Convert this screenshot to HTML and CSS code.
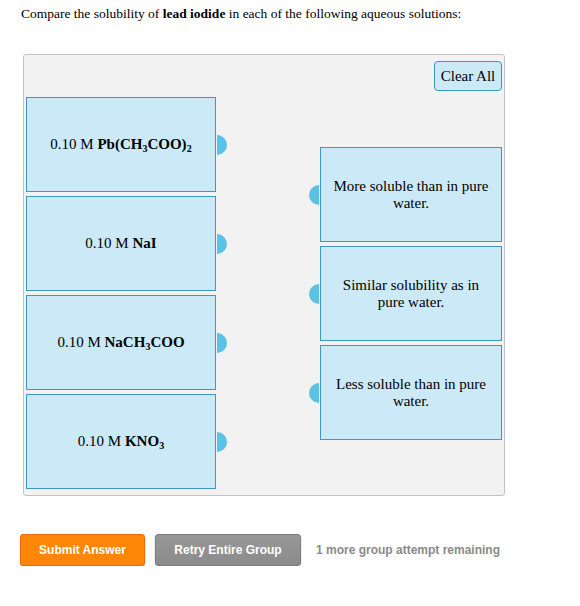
FILE: index.html
```html
<!DOCTYPE html>
<html>
<head>
<meta charset="utf-8">
<link rel="stylesheet" href="styles.css">
</head>
<body>
<div class="page">
  <p class="prompt">Compare the solubility of <b>lead iodide</b> in each of the following aqueous solutions:</p>
  <div class="board">
    <div class="board-head">
      <button class="clear">Clear All</button>
    </div>
    <div class="columns">
      <div class="col col-left">
        <div class="card src"><span>0.10 M <b>Pb(CH<sub>3</sub>COO)<sub>2</sub></b></span><i class="tab tab-right"></i></div>
        <div class="card src"><span>0.10 M <b>NaI</b></span><i class="tab tab-right"></i></div>
        <div class="card src"><span>0.10 M <b>NaCH<sub>3</sub>COO</b></span><i class="tab tab-right"></i></div>
        <div class="card src"><span>0.10 M <b>KNO<sub>3</sub></b></span><i class="tab tab-right"></i></div>
      </div>
      <div class="col col-right">
        <div class="card dst"><span>More soluble than in pure water.</span><i class="tab tab-left"></i></div>
        <div class="card dst"><span>Similar solubility as in pure water.</span><i class="tab tab-left"></i></div>
        <div class="card dst"><span>Less soluble than in pure water.</span><i class="tab tab-left"></i></div>
      </div>
    </div>
  </div>
  <div class="actions">
    <button class="btn btn-submit">Submit Answer</button>
    <button class="btn btn-retry">Retry Entire Group</button>
    <span class="remaining">1 more group attempt remaining</span>
  </div>
</div>
</body>
</html>
```
FILE: styles.css
```css
html, body {
  margin: 0;
  padding: 0;
  background: #ffffff;
}
.page {
  padding: 6px 0 0 21px;
  font-family: "Liberation Serif", "Times New Roman", serif;
  color: #000;
}
.prompt {
  margin: 0;
  font-size: 13.5px;
  line-height: 16px;
}
.board {
  box-sizing: border-box;
  margin: 32px 0 0 2px;
  width: 482px;
  border: 1px solid #b9c6d0;
  border-radius: 3px;
  background: #f2f2f2;
  padding: 6px 2px 6px 2px;
}
.board-head {
  display: flex;
  justify-content: flex-end;
}
.clear {
  font-family: "Liberation Serif", "Times New Roman", serif;
  font-size: 15px;
  color: #000;
  height: 30px;
  width: 68px;
  padding: 0;
  background: #cce9f7;
  border: 1px solid #3e97c2;
  border-radius: 4px;
}
.columns {
  display: flex;
  justify-content: space-between;
  margin-top: 6px;
}
.col {
  display: flex;
  flex-direction: column;
  gap: 4px;
}
.col-right {
  margin-top: 50px;
}
.card {
  position: relative;
  box-sizing: border-box;
  height: 95px;
  display: flex;
  align-items: center;
  justify-content: center;
  text-align: center;
  background: #cce9f7;
  border: 1px solid #3e97c2;
  font-size: 15px;
  line-height: 17px;
}
.src {
  width: 190px;
}
.dst {
  width: 182px;
  padding: 0 10px;
}
sub {
  font-size: 10px;
  line-height: 0;
  vertical-align: -3px;
}
.tab {
  position: absolute;
  top: 50%;
  width: 10px;
  height: 20px;
  margin-top: -10px;
  background: #5bc1e5;
}
.tab-right {
  left: 100%;
  margin-left: 2px;
  border-radius: 0 10px 10px 0;
}
.tab-left {
  right: 100%;
  margin-right: 2px;
  border-radius: 10px 0 0 10px;
}
.actions {
  display: flex;
  align-items: center;
  margin-top: 38px;
  margin-left: -1px;
  font-family: "Liberation Sans", Arial, sans-serif;
}
.btn {
  font-family: "Liberation Sans", Arial, sans-serif;
  font-weight: bold;
  font-size: 12px;
  color: #fff;
  height: 32px;
  padding: 0 18px;
  border-radius: 3px;
  margin-right: 10px;
  box-shadow: 0 1px 2px rgba(0,0,0,0.2);
}
.btn-submit {
  width: 125px;
  background: #fe8606;
  border: 1px solid #f06a14;
}
.btn-retry {
  width: 146px;
  background: linear-gradient(#989898, #8b8b8b);
  border: 1px solid #7c7c7c;
}
.remaining {
  margin-left: 5px;
  font-weight: bold;
  font-size: 12px;
  color: #8a8a8a;
}
```
